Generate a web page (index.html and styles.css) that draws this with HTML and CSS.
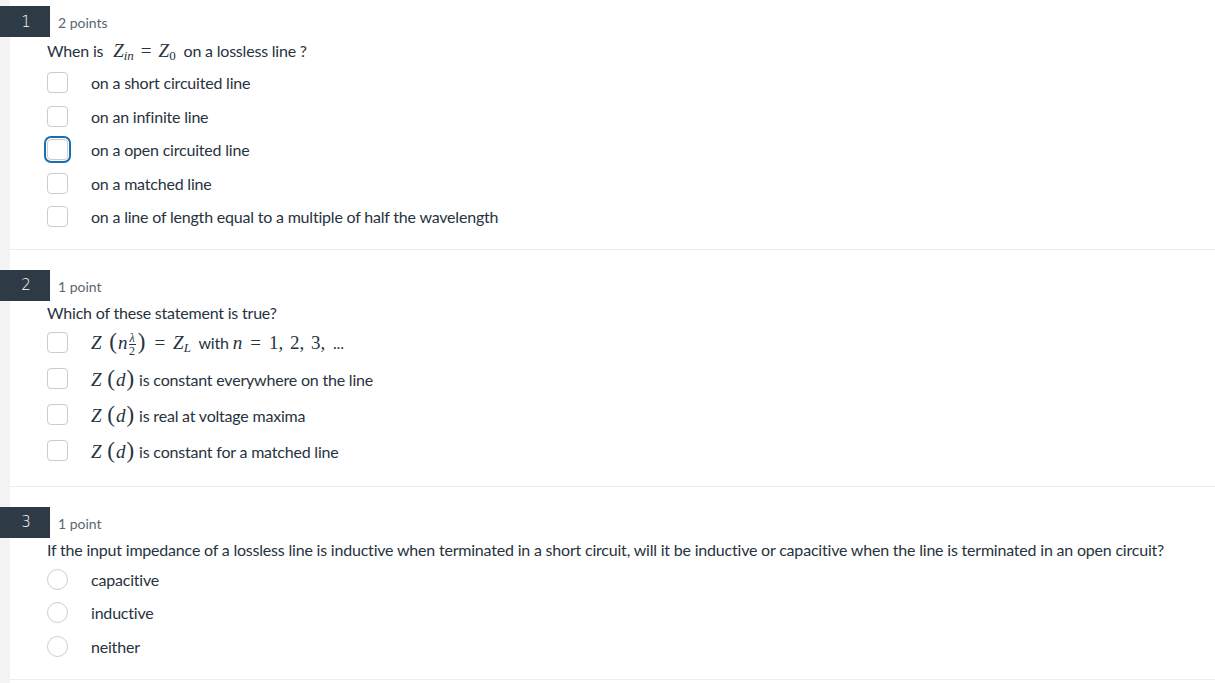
FILE: index.html
```html
<!DOCTYPE html>
<html>
<head>
<meta charset="utf-8">
<link rel="stylesheet" href="styles.css">
</head>
<body>
<div class="page">
  <section class="q q-first">
    <div class="q-head"><span class="badge">1</span><span class="pts">2 points</span></div>
    <div class="q-text q-text-math">When is <span class="m m-inline"><i>Z</i><sub class="sub-i">in</sub><span class="rel">=</span><i>Z</i><sub>0</sub></span> on a lossless line ?</div>
    <ul class="opts">
      <li class="opt"><span class="box"></span><span>on a short circuited line</span></li>
      <li class="opt"><span class="box"></span><span>on an infinite line</span></li>
      <li class="opt"><span class="box box-focus"></span><span>on a open circuited line</span></li>
      <li class="opt"><span class="box"></span><span>on a matched line</span></li>
      <li class="opt"><span class="box"></span><span>on a line of length equal to a multiple of half the wavelength</span></li>
    </ul>
  </section>

  <section class="q q-math">
    <div class="q-head"><span class="badge">2</span><span class="pts">1 point</span></div>
    <div class="q-text">Which of these statement is true?</div>
    <ul class="opts">
      <li class="opt opt-math"><span class="box"></span><span><span class="m m-wide"><i>Z</i> <span class="paren">(</span><i>n</i><span class="frac"><span class="num"><i>λ</i></span><span class="den">2</span></span><span class="paren">)</span><span class="rel rel-wide">=</span><i>Z</i><sub class="sub-i">L</sub></span> with <span class="m m-wide"><i>n</i><span class="rel rel-wide">=</span>1, 2, 3,</span> ...</span></li>
      <li class="opt opt-math"><span class="box"></span><span><span class="m"><i>Z</i> <span class="paren">(</span><i>d</i><span class="paren">)</span></span> is constant everywhere on the line</span></li>
      <li class="opt opt-math"><span class="box"></span><span><span class="m"><i>Z</i> <span class="paren">(</span><i>d</i><span class="paren">)</span></span> is real at voltage maxima</span></li>
      <li class="opt opt-math"><span class="box"></span><span><span class="m"><i>Z</i> <span class="paren">(</span><i>d</i><span class="paren">)</span></span> is constant for a matched line</span></li>
    </ul>
  </section>

  <section class="q">
    <div class="q-head"><span class="badge">3</span><span class="pts">1 point</span></div>
    <div class="q-text">If the input impedance of a lossless line is inductive when terminated in a short circuit, will it be inductive or capacitive when the line is terminated in an open circuit?</div>
    <ul class="opts">
      <li class="opt"><span class="box radio"></span><span>capacitive</span></li>
      <li class="opt"><span class="box radio"></span><span>inductive</span></li>
      <li class="opt"><span class="box radio"></span><span>neither</span></li>
    </ul>
  </section>
</div>
</body>
</html>
```

FILE: styles.css
```css
html, body {
  margin: 0;
  padding: 0;
}
body {
  background: #f3f3f3;
  font-family: Lato, "Open Sans", sans-serif;
  font-size: 16px;
  color: #27333e;
}
.page {
  margin-left: 10px;
  background: #fff;
  min-height: 100vh;
}
.q {
  padding: 20px 0 16px 37px;
  border-bottom: 1px solid #ececec;
}
.q-first {
  padding-top: 6px;
  padding-bottom: 15px;
}
.q-math {
  padding-bottom: 17px;
}
.q-head {
  display: flex;
  align-items: center;
  height: 31px;
  margin-left: -47px;
  gap: 8px;
}
.badge {
  width: 50px;
  height: 31px;
  background: #2e3b46;
  color: #fff;
  display: flex;
  align-items: center;
  justify-content: center;
  padding-left: 2px;
  box-sizing: border-box;
  font-family: "DejaVu Sans", sans-serif;
  font-size: 15px;
  font-weight: 300;
}
.pts {
  font-size: 14px;
  color: #5b6670;
  padding-top: 2px;
}
.q-text {
  margin-top: 1px;
  line-height: 22px;
  letter-spacing: -0.2px;
}
.q-text-math {
  line-height: 26px;
}
.opts {
  list-style: none;
  margin: 2px 0 0;
  padding: 0;
}
.q-math .opts {
  margin-top: 1px;
}
.opt {
  display: flex;
  align-items: center;
  height: 33.5px;
  gap: 23px;
  letter-spacing: -0.2px;
}
.opt-math {
  height: 36px;
}
.box {
  width: 21px;
  height: 21px;
  flex: none;
  box-sizing: border-box;
  border: 1px solid #c8cdd2;
  border-radius: 4px;
  background: #fff;
}
.box-focus {
  outline: 2.5px solid #1b6eae;
  outline-offset: 1px;
}
.radio {
  border-radius: 50%;
}
.m {
  font-family: "Liberation Serif", "DejaVu Serif", serif;
  font-size: 19px;
  letter-spacing: 0;
  white-space: nowrap;
}
.m-inline {
  margin: 0 4px 0 6px;
}
.m-wide {
  margin-right: 4px;
  word-spacing: 2px;
}
.m i {
  font-style: italic;
}
.m sub {
  font-size: 13px;
  vertical-align: -3px;
  line-height: 0;
}
.sub-i {
  font-style: italic;
}
.rel {
  margin: 0 7px;
}
.rel-wide {
  margin: 0 8px;
}
.paren {
  font-size: 23px;
  line-height: 1;
  display: inline-block;
  margin: 0 1px;
}
.frac {
  display: inline-flex;
  flex-direction: column;
  align-items: center;
  vertical-align: 7px;
  font-size: 12px;
  line-height: 10px;
  margin: 0 1px;
}
.frac .num {
  border-bottom: 1px solid #27333e;
  padding: 0 1px 1px;
}
.frac .den {
  padding-top: 1px;
}
```
